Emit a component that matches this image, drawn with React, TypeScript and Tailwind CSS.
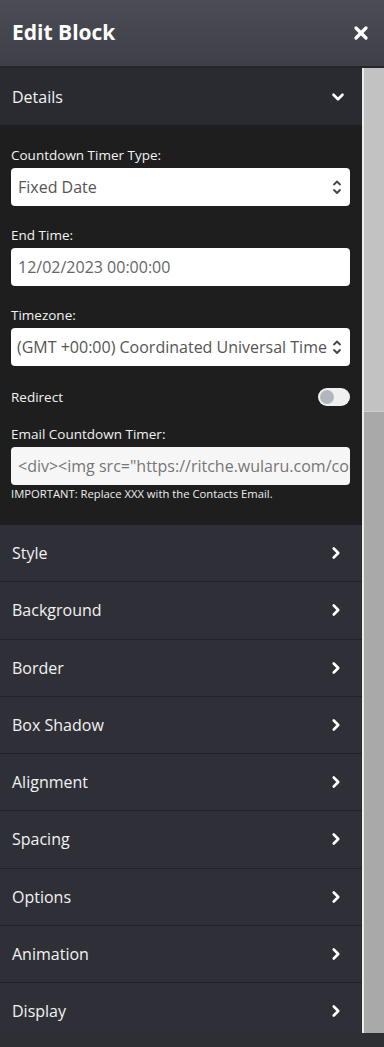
import { ChevronDown, ChevronRight, X } from "lucide-react";

const sections = [
  "Style",
  "Background",
  "Border",
  "Box Shadow",
  "Alignment",
  "Spacing",
  "Options",
  "Animation",
  "Display",
];

const SelectArrows = () => (
  <svg width="10" height="22" viewBox="0 0 10 22" fill="none" className="shrink-0">
    <path d="M2 8.5 L5 5.5 L8 8.5" stroke="#444" strokeWidth="1.8" strokeLinecap="round" strokeLinejoin="round" />
    <path d="M2 14 L5 17 L8 14" stroke="#444" strokeWidth="1.8" strokeLinecap="round" strokeLinejoin="round" />
  </svg>
);

const Label = ({ text }: { text: string }) => (
  <p className="text-[13.5px] leading-[20px] text-[#f2f2f2] mb-[3px]">{text}</p>
);

const App = () => {
  return (
    <div
      className="w-[384px] h-[1047px] flex flex-col overflow-hidden bg-[#2e2f34]"
      style={{ fontFamily: '"Open Sans", "Liberation Sans", sans-serif' }}
    >
      {/* header */}
      <div className="h-[68px] shrink-0 flex items-center justify-between pl-[12px] pr-[13px] bg-gradient-to-b from-[#4b4c54] to-[#3f4047] border-b-2 border-[#26272c]">
        <h1 className="text-[21px] font-bold text-white">Edit Block</h1>
        <X size={20} strokeWidth={4} className="text-white" />
      </div>

      <div className="flex h-[965px] shrink-0">
        <div className="w-[362px] overflow-hidden bg-[#2f3037]">
          <div className="h-[57px] flex items-center justify-between pl-[12px] pr-[15px] bg-[#2a2b31]">
            <span className="text-[16px] text-[#f2f2f2]">Details</span>
            <ChevronDown size={18} strokeWidth={3.5} className="text-white" />
          </div>

          <div className="h-[400px] bg-[#1e1e1e] pt-[20px] pl-[11px] pr-[12px]">
            <Label text="Countdown Timer Type:" />
            <div className="h-[38px] rounded-[4px] bg-white flex items-center justify-between pl-[7px] pr-[8px]">
              <span className="text-[16px] text-[#555]">Fixed Date</span>
              <SelectArrows />
            </div>

            <div className="mt-[19px]">
              <Label text="End Time:" />
              <div className="h-[38px] rounded-[4px] bg-white flex items-center pl-[7px]">
                <span className="text-[16px] text-[#666]">12/02/2023 00:00:00</span>
              </div>
            </div>

            <div className="mt-[19px]">
              <Label text="Timezone:" />
              <div className="h-[38px] rounded-[4px] bg-white flex items-center justify-between pl-[6px] pr-[8px]">
                <span className="text-[16px] text-[#555] whitespace-nowrap">
                  (GMT +00:00) Coordinated Universal Time
                </span>
                <SelectArrows />
              </div>
            </div>

            <div className="mt-[21px] flex items-center justify-between h-[20px]">
              <span className="text-[13.5px] text-[#f2f2f2]">Redirect</span>
              <div className="w-[32px] h-[18px] rounded-full bg-[#f0f0f0] flex items-center pl-[2px]">
                <div className="w-[14px] h-[14px] rounded-full bg-[#b3b6bd]" />
              </div>
            </div>

            <div className="mt-[17px]">
              <Label text="Email Countdown Timer:" />
              <input
                readOnly
                value={'<div><img src="https://ritche.wularu.com/countdown/XXX"></div>'}
                className="block w-full h-[38px] rounded-[4px] bg-[#f6f6f6] pl-[7px] mt-[1px] text-[16px] text-[#777] outline-none"
              />
              <p className="text-[11.25px] leading-[16px] text-[#eee] mt-[1px]">
                IMPORTANT: Replace XXX with the Contacts Email.
              </p>
            </div>
          </div>

          {sections.map((s) => (
            <div
              key={s}
              className="h-[57.25px] flex items-center justify-between pl-[12px] pr-[17px] border-b border-[#22232a]"
            >
              <span className="text-[16px] text-[#f2f2f2]">{s}</span>
              <ChevronRight size={18} strokeWidth={3.5} className="text-white" />
            </div>
          ))}
        </div>

        {/* scrollbar */}
        <div className="w-[22px] flex flex-col border-l-2 border-[#ececec]">
          <div className="h-[344px] bg-[#c2c2c2] border-b border-[#cfcfcf]" />
          <div className="flex-1 bg-[#a9a9a9]" />
        </div>
      </div>

      <div className="flex-1 bg-[#2e2f34]" />
    </div>
  );
};

export default App;
